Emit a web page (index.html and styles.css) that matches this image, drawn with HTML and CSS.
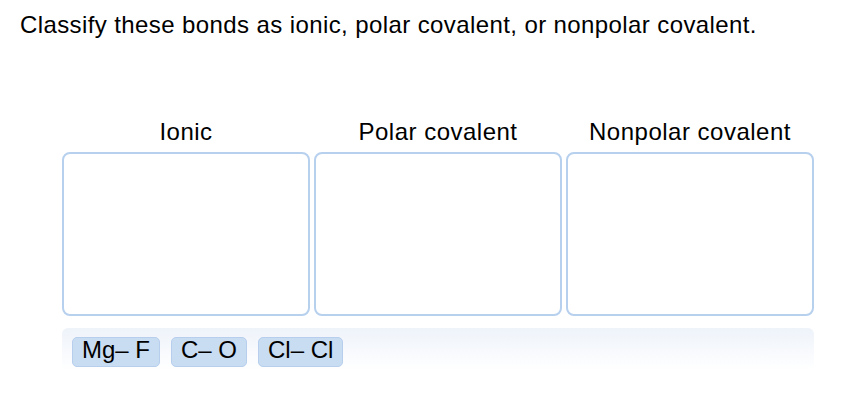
FILE: index.html
```html
<!DOCTYPE html>
<html>
<head>
<meta charset="utf-8">
<link rel="stylesheet" href="styles.css">
</head>
<body>
<div class="page">
  <p class="prompt">Classify these bonds as ionic, polar covalent, or nonpolar covalent.</p>
  <div class="sorter">
    <div class="bins">
      <div class="bin">
        <div class="bin-label">Ionic</div>
        <div class="bin-box"></div>
      </div>
      <div class="bin">
        <div class="bin-label">Polar covalent</div>
        <div class="bin-box"></div>
      </div>
      <div class="bin">
        <div class="bin-label">Nonpolar covalent</div>
        <div class="bin-box"></div>
      </div>
    </div>
    <div class="tray">
      <span class="chip">Mg– F</span>
      <span class="chip">C– O</span>
      <span class="chip">Cl– Cl</span>
    </div>
  </div>
</div>
</body>
</html>
```
FILE: styles.css
```css
html, body {
  margin: 0;
  padding: 0;
  background: #ffffff;
}
body {
  font-family: "Liberation Sans", Arial, sans-serif;
  color: #000;
}
.page {
  padding: 11px 0 0 20px;
}
.prompt {
  margin: 0;
  font-size: 24px;
  line-height: 28px;
  letter-spacing: 0.4px;
}
.sorter {
  margin: 79px 0 0 42px;
  width: 752px;
}
.bins {
  display: flex;
  gap: 4px;
}
.bin {
  flex: 1;
  display: flex;
  flex-direction: column;
  align-items: stretch;
}
.bin-label {
  text-align: center;
  font-size: 24px;
  line-height: 28px;
  letter-spacing: 0.5px;
  margin-bottom: 6px;
}
.bin-box {
  height: 160px;
  border: 2px solid #b6d0ee;
  border-radius: 8px;
}
.tray {
  margin-top: 12px;
  height: 42px;
  padding: 9px 10px 0;
  box-sizing: border-box;
  border-radius: 6px 6px 0 0;
  background: linear-gradient(to bottom, #eef3fa 0%, #ffffff 100%);
  display: flex;
  gap: 11px;
  align-items: flex-start;
}
.chip {
  display: inline-block;
  height: 30px;
  line-height: 24px;
  box-sizing: border-box;
  padding: 0 9px;
  font-size: 24px;
  background: #c8dcf2;
  border: 1px solid #b7cfed;
  border-radius: 5px;
  white-space: nowrap;
}
```
